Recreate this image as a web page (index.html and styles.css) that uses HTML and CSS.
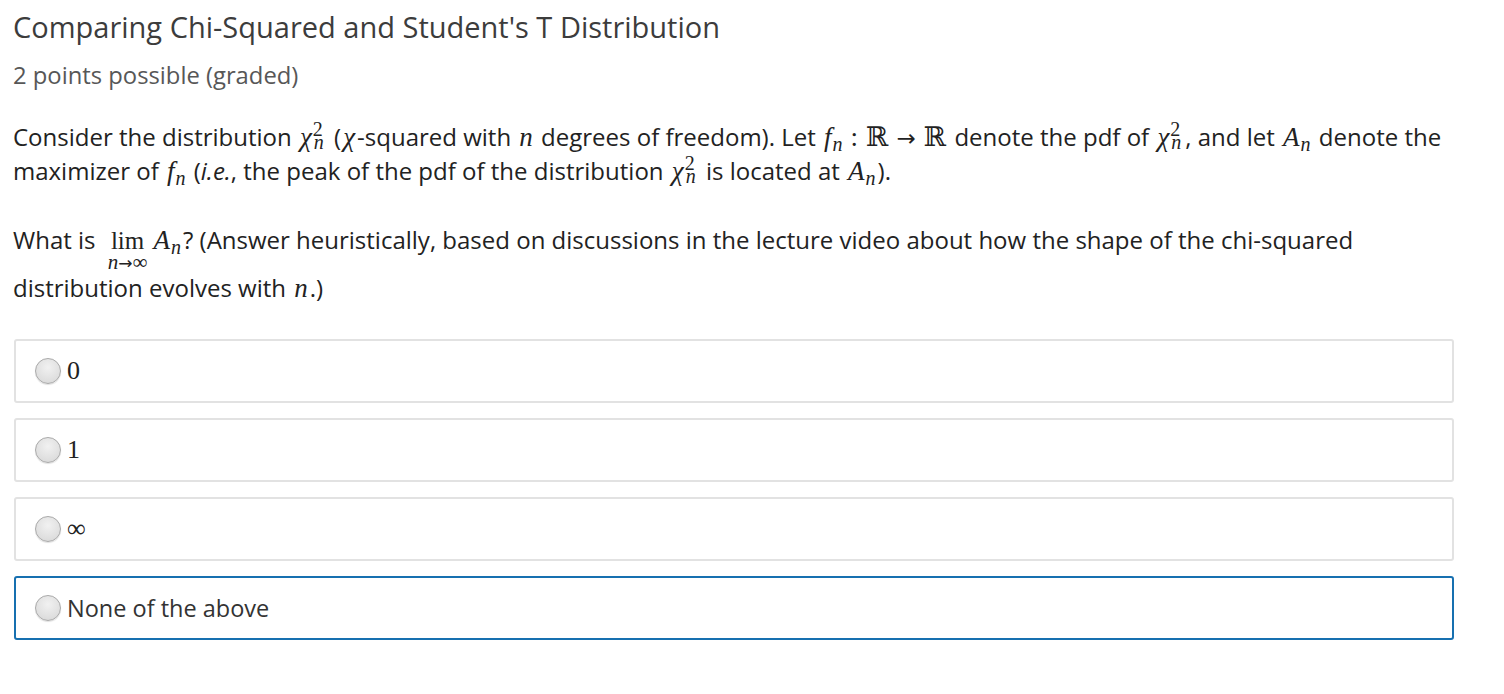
FILE: index.html
```
<!DOCTYPE html>
<html>
<head>
    <title>Comparing Chi-Squared and Student's T Distribution</title>
    <link rel="stylesheet" href="styles.css">
</head>
<body>
    <div class="problem">
        <h2 class="problem-title">Comparing Chi-Squared and Student's T Distribution</h2>
        <div class="problem-progress">2 points possible (graded)</div>

        <p class="prompt">
            Consider the distribution <span class="math">χ<span class="sup">2</span><span class="sub">n</span></span>
            (<span class="math">χ</span>-squared with <span class="math">n</span> degrees of freedom). Let
            <span class="math">f<span class="sub sub-low">n</span><span class="up op">:</span><span class="up">ℝ</span><span class="up op arrow">→</span><span class="up">ℝ</span></span>
            denote the pdf of <span class="math">χ<span class="sup">2</span><span class="sub">n</span></span>, and let
            <span class="math">A<span class="sub sub-low">n</span></span> denote the maximizer of
            <span class="math">f<span class="sub sub-low">n</span></span> (<i>i.e.</i>, the peak of the pdf of the distribution
            <span class="math">χ<span class="sup">2</span><span class="sub">n</span></span> is located at
            <span class="math">A<span class="sub sub-low">n</span></span>).
        </p>

        <p class="prompt prompt-limit">
            What is <span class="limit"><span class="lim">lim</span><span class="under">n<span class="up arrow">→</span><span class="up">∞</span></span></span><span class="math">A<span class="sub sub-low">n</span></span>? (Answer heuristically, based on discussions in the lecture video about how the shape of the chi-squared distribution evolves with <span class="math">n</span>.)
        </p>

        <div class="choices">
            <label class="choice">
                <span class="radio"></span>
                <span class="choice-text math-text">0</span>
            </label>
            <label class="choice">
                <span class="radio"></span>
                <span class="choice-text math-text">1</span>
            </label>
            <label class="choice">
                <span class="radio"></span>
                <span class="choice-text math-text">∞</span>
            </label>
            <label class="choice selected">
                <span class="radio"></span>
                <span class="choice-text">None of the above</span>
            </label>
        </div>
    </div>
</body>
</html>
```

FILE: styles.css
```
body {
    margin: 0;
    background: #fff;
    font-family: 'Open Sans', 'DejaVu Sans', sans-serif;
    color: #313131;
}

.problem {
    padding: 8px 50px 0 13px;
}

.problem-title {
    margin: 0;
    font-size: 29px;
    font-weight: normal;
    line-height: 38px;
    color: #3c3c3c;
}

.problem-progress {
    margin-top: 14px;
    font-size: 23.8px;
    line-height: 30px;
    color: #575757;
}

.prompt {
    margin: 30px 0 0;
    font-size: 24px;
    line-height: 34px;
    color: #222;
}

.prompt-limit {
    margin-top: 28px;
    line-height: 48px;
}

.math {
    font-family: 'Liberation Serif', 'DejaVu Serif', serif;
    font-style: italic;
    font-size: 27px;
    line-height: 0;
    white-space: nowrap;
    margin: 0 2px;
}

.up {
    font-style: normal;
}

.op {
    margin: 0 8px;
}

.arrow {
    font-family: 'DejaVu Sans', sans-serif;
    font-size: 0.85em;
}

.sup {
    font-style: normal;
    font-size: 20px;
    line-height: 0;
    vertical-align: 10px;
    margin-left: 1px;
}

.sub {
    font-size: 20px;
    line-height: 0;
    vertical-align: -3px;
    margin-left: -9px;
    margin-right: 2px;
}

.sub-low {
    margin-left: 1px;
    margin-right: 0;
    vertical-align: -5px;
}

.limit {
    display: inline-flex;
    flex-direction: column;
    align-items: center;
    font-family: 'Liberation Serif', 'DejaVu Serif', serif;
    margin: 0 4px 0 6px;
    line-height: 1;
    vertical-align: baseline;
}

.lim {
    font-size: 25px;
}

.under {
    font-style: italic;
    font-size: 21px;
    line-height: 18px;
    margin-bottom: -18px;
}

.under .arrow {
    font-size: 17px;
}

.choices {
    margin-top: 27px;
    display: flex;
    flex-direction: column;
    gap: 15px;
}

.choice {
    display: flex;
    align-items: center;
    height: 60px;
    padding-left: 19px;
    border: 2px solid #e2e2e2;
    border-radius: 3px;
    margin-left: 1px;
}

.choice.selected {
    border-color: #1770b0;
}

.radio {
    width: 24px;
    height: 24px;
    border-radius: 50%;
    border: 1px solid #a9a9a9;
    background: radial-gradient(circle at 50% 35%, #f1f1f1 0%, #dedede 70%, #cfcfcf 100%);
    box-shadow: 0 1px 1px rgba(0, 0, 0, 0.12);
    flex-shrink: 0;
}

.choice-text {
    margin-left: 6px;
    font-size: 23.5px;
    color: #333;
}

.math-text {
    font-family: 'Liberation Serif', 'DejaVu Serif', serif;
    font-size: 26px;
    color: #222;
}
```
